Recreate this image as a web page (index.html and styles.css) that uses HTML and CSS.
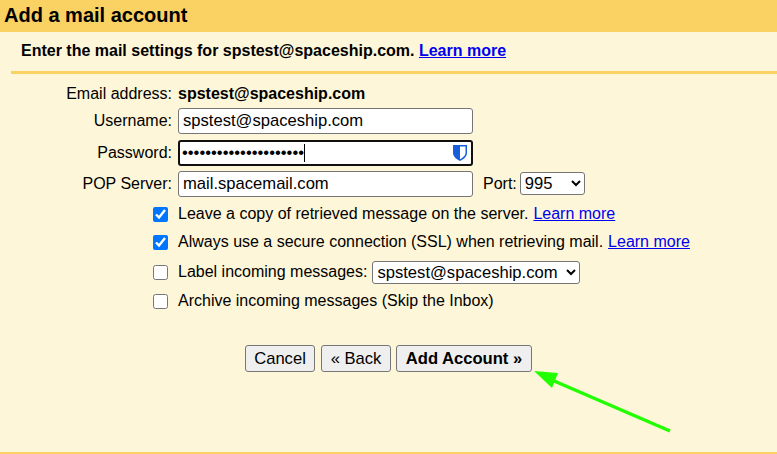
FILE: index.html
```html
<!DOCTYPE html>
<html lang="en">
<head>
    <meta charset="UTF-8">
    <title>Add a mail account</title>
    <link rel="stylesheet" href="styles.css">
</head>
<body>
    <h1 class="title">Add a mail account</h1>

    <div class="intro">
        <b>Enter the mail settings for spstest@spaceship.com.</b>
        <a href="#"><b>Learn more</b></a>
    </div>

    <form class="settings">
        <div class="row email-row">
            <label class="name">Email address:</label>
            <b>spstest@spaceship.com</b>
        </div>
        <div class="row username-row">
            <label class="name" for="username">Username:</label>
            <input class="field" id="username" type="text" value="spstest@spaceship.com">
        </div>
        <div class="row password-row">
            <label class="name" for="password">Password:</label>
            <div class="password-box">
                <span class="dots">•••••••••••••••••••••</span><span class="caret"></span>
                <svg class="shield" width="14" height="16" viewBox="0 0 14 16">
                    <path d="M0 0h14v8c0 3.500-3.500 6.300-7 8-3.500-1.700-7-4.500-7-8z" fill="#175ddc"/>
                    <path d="M7 1.500h5.500v6.500c0 2.500-2.800 4.800-5.500 6.200z" fill="#ffffff"/>
                </svg>
            </div>
        </div>
        <div class="row server-row">
            <label class="name" for="server">POP Server:</label>
            <input class="field" id="server" type="text" value="mail.spacemail.com">
            <label class="port-label" for="port">Port:</label>
            <select class="port" id="port"><option>995</option></select>
        </div>

        <div class="check check-copy">
            <input type="checkbox" id="copy" checked>
            <label for="copy">Leave a copy of retrieved message on the server.</label>
            <a href="#">Learn more</a>
        </div>
        <div class="check check-ssl">
            <input type="checkbox" id="ssl" checked>
            <label for="ssl">Always use a secure connection (SSL) when retrieving mail.</label>
            <a href="#">Learn more</a>
        </div>
        <div class="check check-label">
            <input type="checkbox" id="labelmsg">
            <label for="labelmsg">Label incoming messages:</label>
            <select class="label-select"><option>spstest@spaceship.com</option></select>
        </div>
        <div class="check check-archive">
            <input type="checkbox" id="archive">
            <label for="archive">Archive incoming messages (Skip the Inbox)</label>
        </div>

        <div class="buttons">
            <button type="button" class="btn cancel">Cancel</button>
            <button type="button" class="btn back">« Back</button>
            <button type="button" class="btn add">Add Account »</button>
        </div>
    </form>

    <!-- annotation arrow -->
    <svg class="arrow" width="150" height="70" viewBox="0 0 150 70">
        <path d="M137 60 L20 9.500" stroke="#22ff00" stroke-width="3.500" fill="none"/>
        <path d="M1 0 L25 2 L19 17 Z" fill="#22ff00"/>
    </svg>
</body>
</html>
```

FILE: styles.css
```css
html, body {
    height: 100%;
}

body {
    margin: 0;
    position: relative;
    box-sizing: border-box;
    height: 454px;
    overflow: hidden;
    font-family: "Liberation Sans", Arial, sans-serif;
    font-size: 16px;
    color: #000000;
    background-color: #fef6d8;
    border-bottom: 2px solid #fad163;
}

a {
    color: #0000ee;
}

.title {
    margin: 0;
    height: 32px;
    padding-left: 4px;
    font-size: 20px;
    line-height: 31px;
    background-color: #fad163;
}

.intro {
    margin-left: 11px;
    height: 42px;
    padding-left: 10px;
    line-height: 37px;
    box-sizing: border-box;
    border-bottom: 3px solid #fad163;
}

.settings {
    padding-top: 7px;
}

.row {
    display: flex;
    align-items: center;
}

.name {
    width: 172px;
    margin-right: 6px;
    text-align: right;
    flex-shrink: 0;
}

.email-row {
    height: 26px;
}

.username-row {
    height: 26px;
    margin-top: 1px;
}

.password-row {
    height: 26px;
    margin-top: 6px;
}

.server-row {
    height: 27px;
    margin-top: 4px;
}

.field {
    width: 295px;
    height: 26px;
    box-sizing: border-box;
    padding: 1px 4px;
    font-family: inherit;
    font-size: 16.6px;
    border: 1px solid #767676;
    border-radius: 3px;
    background-color: #ffffff;
    color: #000000;
}

.password-box {
    position: relative;
    display: flex;
    align-items: center;
    width: 295px;
    height: 26px;
    box-sizing: border-box;
    padding-left: 2px;
    border: 2px solid #101010;
    border-radius: 3px;
    background-color: #ffffff;
    font-size: 16.6px;
}

.caret {
    display: inline-block;
    width: 1px;
    height: 18px;
    background-color: #000000;
}

.shield {
    position: absolute;
    right: 4px;
    top: 3px;
}

.port-label {
    margin-left: 10px;
    margin-right: 3px;
}

.port {
    width: 65px;
    height: 23px;
    font-family: inherit;
    font-size: 16.6px;
    border: 1px solid #767676;
    border-radius: 3px;
    background-color: #ffffff;
}

.check {
    display: flex;
    align-items: center;
    padding-left: 150px;
}

.check input {
    width: 15px;
    height: 15px;
    margin: 0 10px 0 3px;
}

.check a {
    margin-left: 5px;
}

.check-copy {
    height: 24px;
    margin-top: 5px;
}

.check-ssl {
    height: 24px;
    margin-top: 4px;
}

.check-label {
    height: 24px;
    margin-top: 6px;
}

.check-archive {
    height: 24px;
    margin-top: 5px;
}

.label-select {
    width: 208px;
    height: 23px;
    margin-left: 5px;
    font-family: inherit;
    font-size: 16.6px;
    border: 1px solid #767676;
    border-radius: 3px;
    background-color: #ffffff;
}

.buttons {
    display: flex;
    margin: 32px 0 0 245px;
}

.btn {
    height: 27px;
    padding: 0;
    font-family: inherit;
    font-size: 16.6px;
    color: #000000;
    background-color: #efefef;
    border: 1px solid #767676;
    border-radius: 3px;
}

.cancel {
    width: 70px;
}

.back {
    width: 70px;
    margin-left: 6px;
}

.add {
    width: 136px;
    margin-left: 5px;
    font-weight: bold;
}

.arrow {
    position: absolute;
    left: 533px;
    top: 371px;
}
```
